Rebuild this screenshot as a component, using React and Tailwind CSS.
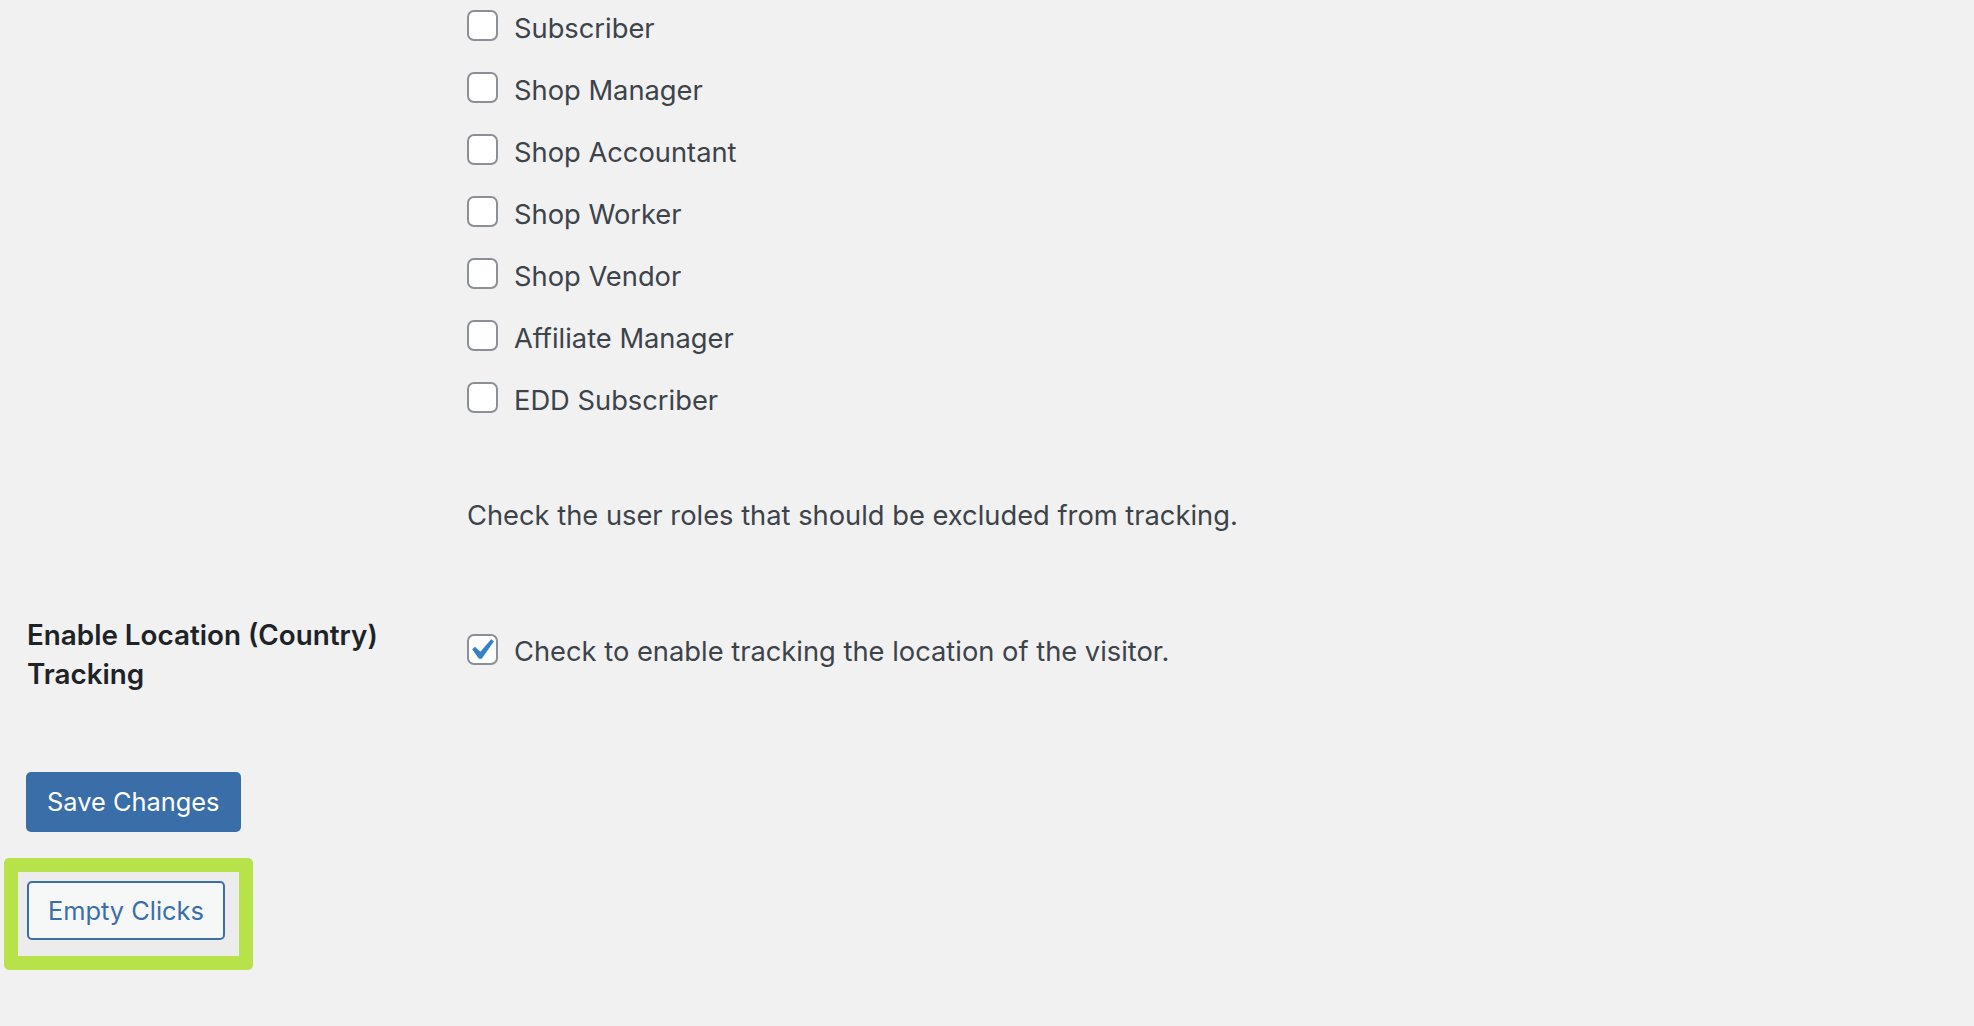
import React from "react";

const roles = [
  "Subscriber",
  "Shop Manager",
  "Shop Accountant",
  "Shop Worker",
  "Shop Vendor",
  "Affiliate Manager",
  "EDD Subscriber",
];

function Box({ checked }) {
  return (
    <span className="relative block w-[31px] h-[31px] shrink-0 rounded-[7px] border-2 border-[#8c8f94] bg-white">
      {checked && (
        <svg
          viewBox="0 0 20 20"
          className="absolute left-[-9px] top-[-7px] w-[42px] h-[42px]"
        >
          <path
            d="M14.83 4.89l1.34.94-5.81 8.38H9.02L5.78 9.67l1.34-1.25 2.57 2.4z"
            fill="#3582c4"
          />
        </svg>
      )}
    </span>
  );
}

export default function App() {
  return (
    <div
      className="min-h-[1026px] w-full bg-[#f1f1f1] text-[#3c434a] overflow-hidden"
      style={{ fontFamily: "Inter, 'Noto Sans', sans-serif" }}
    >
      <div className="flex pl-[27px] pt-[10px]">
        <div className="w-[440px] shrink-0" />
        <div className="flex flex-col gap-[31px]">
          {roles.map((r) => (
            <div key={r} className="flex items-center gap-[16px] h-[31px]">
              <Box />
              <span className="text-[27.3px] leading-[31px] pt-[5px]">{r}</span>
            </div>
          ))}
          <p className="mt-[52px] text-[27.3px] leading-[39px]">
            Check the user roles that should be excluded from tracking.
          </p>
        </div>
      </div>

      <div className="flex pl-[27px] mt-[81px]">
        <div className="w-[440px] shrink-0 pr-[60px]">
          <div className="text-[27.8px] leading-[39px] font-semibold text-[#1d2327]">
            Enable Location (Country) Tracking
          </div>
        </div>
        <div className="flex items-center gap-[16px] pt-[18px] h-[31px] box-content">
          <Box checked />
          <span className="text-[27.3px] leading-[31px] pt-[4px]">
            Check to enable tracking the location of the visitor.
          </span>
        </div>
      </div>

      <div className="pl-[26px] mt-[78px] flex flex-col items-start">
        <button className="h-[60px] px-[21px] rounded-[5px] bg-[#3a6ea9] text-white text-[25.4px] leading-none">
          Save Changes
        </button>
        <div className="relative mt-[49px] ml-[1px]">
          <div className="absolute left-[-23px] top-[-23px] right-[-28px] bottom-[-30px] rounded-[5px] border-[14px] border-[#b7e24a] bg-[#ececec]" />
          <button className="relative h-[59px] px-[19px] rounded-[5px] border-2 border-[#3a6ea9] bg-[#f6f7f7] text-[#3a6ea9] text-[25.4px] leading-none">
            Empty Clicks
          </button>
        </div>
      </div>
    </div>
  );
}
